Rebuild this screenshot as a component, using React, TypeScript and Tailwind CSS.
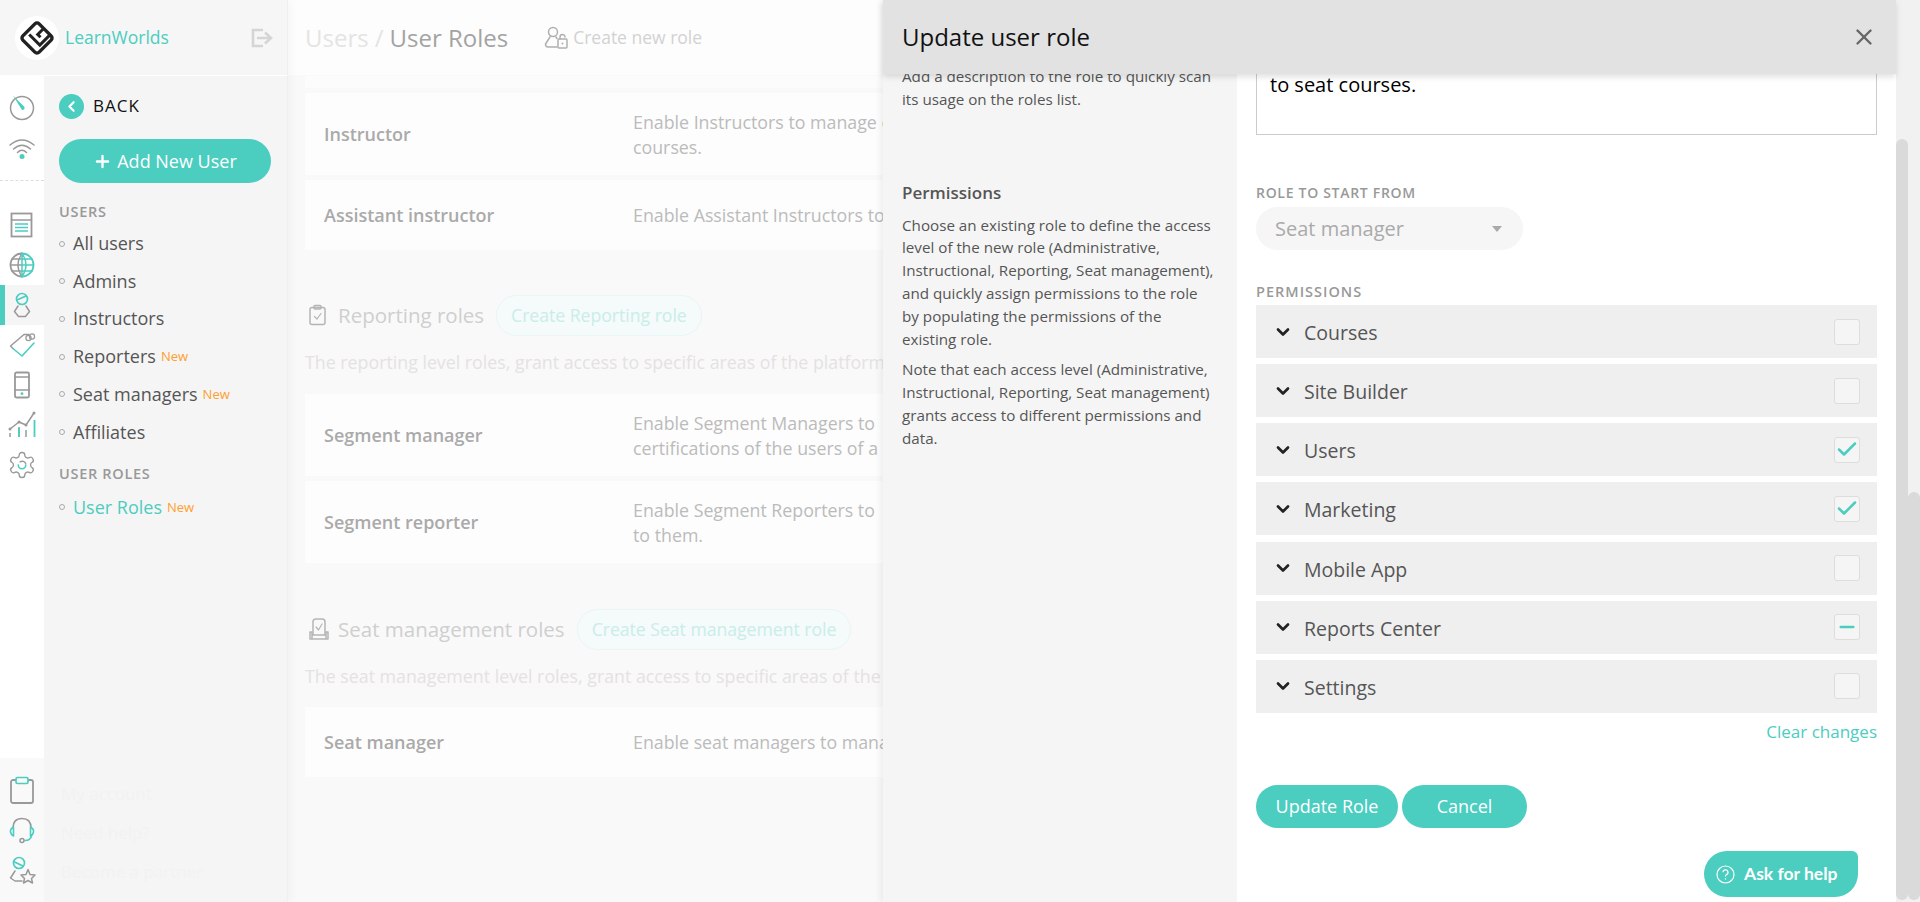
import { Check, ChevronDown, ChevronLeft, Minus, Plus, X } from "lucide-react";
import React from "react";

const teal = "#4bcdc0";
const grey = "#999999";

const Icon = ({ children, size = 30, box = 30 }: { children: React.ReactNode; size?: number; box?: number }) => (
  <svg width={size} height={size} viewBox={`0 0 ${box} ${box}`} fill="none" strokeWidth={1.5} strokeLinecap="round" strokeLinejoin="round">
    {children}
  </svg>
);

const railTop = [
  <Icon key="gauge">
    <circle cx="15" cy="16" r="11.5" stroke={grey} />
    <path d="M6 3.5 L17.5 15 Q18 18 15 18 Z" fill={teal} />
  </Icon>,
  <Icon key="wifi">
    <path d="M3 13 Q15 3 27 13" stroke={grey} />
    <path d="M6.5 17 Q15 9.5 23.5 17" stroke={grey} />
    <path d="M10.5 20.5 Q15 16 19.5 20.5" stroke={grey} />
    <circle cx="15" cy="24.5" r="2.5" fill={teal} />
  </Icon>,
];

const railMain = [
  <Icon key="list">
    <rect x="4.5" y="3.5" width="20" height="23" stroke={grey} strokeWidth={1.8} strokeLinejoin="miter" />
    <path d="M4.5 10 H24.5" stroke={grey} />
    <path d="M8 14 H21 M8 17.5 H21 M8 21 H21" stroke={teal} strokeWidth={1.6} strokeLinecap="butt" />
  </Icon>,
  <Icon key="globe">
    <path d="M15 3.5 A11.5 11.5 0 0 0 15 26.5" stroke={grey} strokeWidth={1.8} />
    <path d="M15 3.5 A11.5 11.5 0 0 1 15 26.5" stroke={teal} strokeWidth={1.8} />
    <path d="M15 3.5 Q7 15 15 26.5 M3.5 15 H15 M5 9 H15 M5 21 H15" stroke={grey} />
    <path d="M15 3.5 Q23 15 15 26.5 M15 3.5 V26.5 M15 15 H26.5 M15 9 H25 M15 21 H25" stroke={teal} />
  </Icon>,
  <Icon key="user">
    <circle cx="15" cy="9" r="5.5" stroke={teal} strokeWidth={1.7} />
    <path d="M10 10 L19 6" stroke={teal} strokeWidth={1.7} />
    <path d="M11 16 L7.5 21.5 L11.5 26.5 H18.5 L22.5 21.5 L19 16" stroke={grey} strokeWidth={1.5} />
  </Icon>,
  <Icon key="tag">
    <path d="M3.5 16 L17 4.5 H22 M3.5 16 L6 18.5" stroke={grey} />
    <circle cx="25" cy="6.5" r="2.6" stroke={grey} strokeWidth={1.2} />
    <circle cx="21.5" cy="8" r="2.6" stroke={grey} strokeWidth={1.2} />
    <path d="M6 18.5 L15 26 L27 13" stroke={teal} strokeWidth={1.6} />
  </Icon>,
  <Icon key="phone">
    <rect x="8" y="2.5" width="14" height="25" rx="1.5" stroke={grey} strokeWidth={1.8} />
    <path d="M8 7 H22 M8 20 H22" stroke={grey} />
    <circle cx="15" cy="23.7" r="1.4" fill={teal} />
  </Icon>,
  <Icon key="chart">
    <path d="M3 19 L12 12 L19 15 L27 3" stroke={grey} />
    <circle cx="3" cy="19" r="1.5" fill={grey} />
    <circle cx="12" cy="12" r="1.5" fill={grey} />
    <circle cx="19" cy="15" r="1.5" fill={grey} />
    <circle cx="27" cy="3" r="1.5" fill={grey} />
    <path d="M3 23 V27 M12 17 V27 M19 20 V27" stroke={grey} strokeLinecap="butt" />
    <path d="M27.5 10 V27 M12 18 V27" stroke={teal} strokeWidth={1.8} strokeLinecap="butt" />
  </Icon>,
  <Icon key="gear" size={30} box={24}>
    <path
      d="M12.22 2h-.44a2 2 0 0 0-2 2v.18a2 2 0 0 1-1 1.73l-.43.25a2 2 0 0 1-2 0l-.15-.08a2 2 0 0 0-2.73.73l-.22.38a2 2 0 0 0 .73 2.73l.15.1a2 2 0 0 1 1 1.72v.51a2 2 0 0 1-1 1.74l-.15.09a2 2 0 0 0-.73 2.73l.22.38a2 2 0 0 0 2.73.73l.15-.08a2 2 0 0 1 2 0l.43.25a2 2 0 0 1 1 1.73V20a2 2 0 0 0 2 2h.44a2 2 0 0 0 2-2v-.18a2 2 0 0 1 1-1.73l.43-.25a2 2 0 0 1 2 0l.15.08a2 2 0 0 0 2.73-.73l.22-.39a2 2 0 0 0-.73-2.73l-.15-.08a2 2 0 0 1-1-1.74v-.5a2 2 0 0 1 1-1.74l.15-.09a2 2 0 0 0 .73-2.73l-.22-.38a2 2 0 0 0-2.73-.73l-.15.08a2 2 0 0 1-2 0l-.43-.25a2 2 0 0 1-1-1.73V4a2 2 0 0 0-2-2z"
      stroke={grey}
      strokeWidth={1.1}
    />
    <path d="M9 12 A3 3 0 0 0 15 12" stroke={teal} strokeWidth={1.3} />
    <path d="M10.5 9.5 A3 3 0 0 1 15 11" stroke={grey} strokeWidth={1.1} />
  </Icon>,
];

const railBottom = [
  <Icon key="clip">
    <rect x="4" y="5" width="22" height="23" rx="2" stroke={grey} strokeWidth={1.8} />
    <rect x="9" y="2.5" width="12" height="6" rx="1.5" stroke={teal} strokeWidth={1.7} fill="#f9f9f9" />
  </Icon>,
  <Icon key="headset">
    <path d="M6 13 Q6 3.5 15 3.5 Q24 3.5 24 13" stroke={grey} strokeWidth={1.7} />
    <path d="M6.5 12 Q3 14 3.5 17 Q4 20 6.5 21 Z M23.5 12 Q27 14 26.5 17 Q26 20 23.5 21 Z" stroke={teal} strokeWidth={1.6} />
    <path d="M24.5 21 Q23.5 25.5 18 25.5" stroke={teal} strokeWidth={1.6} />
    <circle cx="15" cy="25.5" r="2" stroke={grey} strokeWidth={1.5} />
  </Icon>,
  <Icon key="userstar">
    <circle cx="12" cy="8" r="5.5" stroke={teal} strokeWidth={1.7} />
    <path d="M7.5 7 L16 11" stroke={teal} strokeWidth={1.7} />
    <path d="M8 16 L3.5 23 L8 26 L15 26" stroke={grey} />
    <path d="M21 14.5 L23 19.5 L28 20 L24.5 23.5 L25.5 28 L21 25.5 L16.5 28 L17.5 23.5 L14 20 L19 19.5 Z" stroke={grey} />
  </Icon>,
];

const Bullet = () => <span className="h-[6px] w-[6px] shrink-0 rounded-full border border-[#aaaaaa]" />;

const NavItem = ({ label, isNew, active }: { label: string; isNew?: boolean; active?: boolean }) => (
  <div className="flex h-[37.7px] items-center gap-[8px]">
    <Bullet />
    <span className={`text-[18px] ${active ? "font-medium text-[#4bcdc0]" : "text-[#555555]"}`}>{label}</span>
    {isNew && <span className="-ml-[3px] text-[13px] text-[#ff9f2e]">New</span>}
  </div>
);

const Sidebar = () => (
  <div className="relative z-10 flex w-[288px] shrink-0 flex-col border-r border-[#efefef] bg-white shadow-[3px_0_8px_rgba(0,0,0,0.03)]">
    <div className="flex h-[76px] items-center border-b border-white bg-[#f6f6f6] pl-[15px]">
      <div className="flex h-[44px] w-[44px] items-center justify-center rounded-full bg-white">
        <svg width="38" height="38" viewBox="-19 -19 38 38">
          <g transform="rotate(45)">
            <rect x="-11.5" y="-11.5" width="23" height="23" rx="3" fill="#ffffff" stroke="#222222" strokeWidth="3.4" />
            <path d="M-8 3 H7 V-11 M-2 -11 V-3 H2" fill="none" stroke="#222222" strokeWidth="3" />
          </g>
        </svg>
      </div>
      <span className="ml-[6px] text-[17.5px] text-[#4bcdc0]">LearnWorlds</span>
      <svg className="ml-auto mr-[13px]" width="23" height="20" viewBox="0 0 23 20" fill="none" stroke="#d5d5d5" strokeWidth="2.6">
        <path d="M12 2 H2 V18 H12" />
        <path d="M6 10 H18 M14 4.5 L20 10 L14 15.5" />
      </svg>
    </div>
    <div className="flex min-h-0 flex-1">
      <div className="flex w-[44px] shrink-0 flex-col">
        <div className="flex-1 bg-white pt-[11px]">
          {railTop.map((icon, i) => (
            <div key={i} className="flex h-[40px] items-center justify-center">
              {icon}
            </div>
          ))}
          <div className="mt-[13px] border-t border-dashed border-[#dddddd]" />
          <div className="mt-[24px]">
            {railMain.map((icon, i) => (
              <div
                key={i}
                className={`flex h-[40px] items-center justify-center ${i === 2 ? "border-l-[5px] border-[#4bcdc0] bg-[#f5f5f5] pr-[5px]" : ""}`}
              >
                {icon}
              </div>
            ))}
          </div>
        </div>
        <div className="h-[144px] bg-[#f9f9f9] pt-[12px]">
          {railBottom.map((icon, i) => (
            <div key={i} className="flex h-[40px] items-center justify-center">
              {icon}
            </div>
          ))}
        </div>
      </div>
      <div className="flex flex-1 flex-col bg-[#f5f5f5] pl-[15px] pr-[16px] pt-[17px]">
        <div className="flex h-[26px] items-center gap-[9px]">
          <span className="flex h-[25px] w-[25px] items-center justify-center rounded-full bg-[#4bcdc0]">
            <ChevronLeft size={17} color="#ffffff" strokeWidth={3} />
          </span>
          <span className="text-[17px] tracking-[1px] text-[#111111]">BACK</span>
        </div>
        <div className="mt-[20px] flex h-[44px] items-center justify-center gap-[5px] rounded-full bg-[#4bcdc0] text-[18px] text-white">
          <Plus size={19} strokeWidth={3} />
          <span>Add New User</span>
        </div>
        <div className="mt-[18px] text-[14.5px] font-semibold tracking-[0.7px] text-[#999999]">USERS</div>
        <div className="mt-[2px]">
          <NavItem label="All users" />
          <NavItem label="Admins" />
          <NavItem label="Instructors" />
          <NavItem label="Reporters" isNew />
          <NavItem label="Seat managers" isNew />
          <NavItem label="Affiliates" />
        </div>
        <div className="mt-[12px] text-[14.5px] font-semibold tracking-[0.7px] text-[#999999]">USER ROLES</div>
        <div className="mt-[4px]">
          <NavItem label="User Roles" isNew active />
        </div>
        <div className="mt-auto flex flex-col gap-[15px] pb-[18px] pl-[2px] text-[17px] leading-[24px] text-[#f2f2f2]">
          <span>My account</span>
          <span>Need help?</span>
          <span>Become a partner</span>
        </div>
      </div>
    </div>
  </div>
);

const RoleRow = ({ name, lines, h }: { name: string; lines: string[]; h: string }) => (
  <div className={`flex items-center bg-[#fdfdfd] pl-[19px] ${h}`}>
    <span className="w-[309px] shrink-0 pt-[1px] text-[18px] font-semibold text-[#aaaaaa]">{name}</span>
    <span className="whitespace-nowrap pt-[1px] text-[17.8px] leading-[25px] text-[#bbbbbb]">
      {lines.map((l) => (
        <span key={l} className="block">
          {l}
        </span>
      ))}
    </span>
  </div>
);

const SectionHead = ({ icon, title, cta, note }: { icon: React.ReactNode; title: string; cta: string; note: string }) => (
  <>
    <div className="flex h-[42px] items-center">
      <span className="flex w-[26px] shrink-0 justify-start pl-[2px]">{icon}</span>
      <span className="ml-[7px] text-[20.5px] text-[#cfcfcf]">{title}</span>
      <span className="ml-[12px] flex h-[41px] items-center rounded-full border border-[#e9f6f4] bg-[#f5fafa] px-[14px] text-[17.6px] text-[#c8eee9]">
        {cta}
      </span>
    </div>
    <div className="mt-[14px] whitespace-nowrap text-[17.8px] leading-[24px] text-[#e5e2e2]">{note}</div>
  </>
);

const Main = () => (
  <div className="flex w-[595px] shrink-0 flex-col overflow-hidden bg-[#f9f9f9]">
    <div className="flex h-[75px] shrink-0 items-center bg-[#fdfdfd] pl-[17px]">
      <span className="text-[24px] text-[#e4e4e4]">Users</span>
      <span className="ml-[6px] text-[24px] text-[#e4e4e4]">/</span>
      <span className="ml-[6px] text-[24px] text-[#a3a3a3]">User Roles</span>
      <span className="ml-[36px]">
        <Icon size={24} box={24}>
          <circle cx="9" cy="6" r="4.5" stroke="#b0b0b0" />
          <path d="M6 11 L1.5 18 Q1.5 21 4 21 H13 M12 11 L13 12.5" stroke="#b0b0b0" />
          <rect x="14" y="13" width="9" height="9" rx="1" stroke="#b0b0b0" />
          <path d="M16 13 V11 A2.5 2.5 0 0 1 21 11" stroke="#b0b0b0" />
          <circle cx="18.5" cy="17.5" r="1" fill="#b0b0b0" />
        </Icon>
      </span>
      <span className="ml-[5px] text-[17.5px] text-[#d2d2d2]">Create new role</span>
    </div>
    <div className="flex flex-col pl-[17px]">
      <div className="mt-[1px] h-[12px] bg-[#fcfcfc]" />
      <div className="mt-[5px] flex flex-col gap-[5px]">
        <RoleRow h="h-[82px]" name="Instructor" lines={["Enable Instructors to manage c", "courses."]} />
        <RoleRow h="h-[70px]" name="Assistant instructor" lines={["Enable Assistant Instructors to"]} />
      </div>
      <div className="mt-[44px]">
        <SectionHead
          icon={
            <Icon size={22} box={22}>
              <rect x="3" y="3.5" width="15" height="17" rx="2" stroke="#b5b5b5" />
              <rect x="7" y="1.5" width="7" height="3.5" rx="1" stroke="#b5b5b5" />
              <path d="M7.5 12.5 L10 15 L14 9.5" stroke="#b5b5b5" strokeWidth={1.2} />
            </Icon>
          }
          title="Reporting roles"
          cta="Create Reporting role"
          note="The reporting level roles, grant access to specific areas of the platform"
        />
      </div>
      <div className="mt-[20px] flex flex-col gap-[5px]">
        <RoleRow h="h-[82px]" name="Segment manager" lines={["Enable Segment Managers to", "certifications of the users of a"]} />
        <RoleRow h="h-[82px]" name="Segment reporter" lines={["Enable Segment Reporters to", "to them."]} />
      </div>
      <div className="mt-[45px]">
        <SectionHead
          icon={
            <Icon size={24} box={24}>
              <path d="M6 18 V5 Q6 2 9 2 H15 Q18 2 18 5 V18" stroke="#b5b5b5" />
              <path d="M3 15 H5 V22 H3 Z M19 15 H21 V22 H19 Z M5 18 H19 V22 H5" stroke="#b5b5b5" />
              <path d="M9 10 L11.5 13 L15 7" stroke="#b5b5b5" strokeWidth={1.2} />
            </Icon>
          }
          title="Seat management roles"
          cta="Create Seat management role"
          note="The seat management level roles, grant access to specific areas of the"
        />
      </div>
      <div className="mt-[19px]">
        <RoleRow h="h-[70px]" name="Seat manager" lines={["Enable seat managers to mana"]} />
      </div>
    </div>
  </div>
);

const permissions: { name: string; state?: "on" | "some" }[] = [
  { name: "Courses" },
  { name: "Site Builder" },
  { name: "Users", state: "on" },
  { name: "Marketing", state: "on" },
  { name: "Mobile App" },
  { name: "Reports Center", state: "some" },
  { name: "Settings" },
];

const PermissionRow = ({ name, state }: { name: string; state?: "on" | "some" }) => (
  <div className="flex h-[53px] items-center bg-[#efefef] pl-[17px] pr-[17px]">
    <ChevronDown size={20} color="#222222" strokeWidth={3.2} />
    <span className="ml-[11px] pt-[2px] text-[19.5px] font-medium text-[#555555]">{name}</span>
    <span className="ml-auto flex h-[26px] w-[26px] items-center justify-center rounded-[3px] border border-[#dddddd] bg-[#f5f5f5]">
      {state === "on" && <Check size={25} color="#4bcdc0" strokeWidth={2.5} />}
      {state === "some" && <Minus size={22} color="#4bcdc0" strokeWidth={2.5} />}
    </span>
  </div>
);

const Panel = () => (
  <div className="absolute bottom-0 left-[883px] right-0 top-0 z-20 flex shadow-[-3px_0_6px_rgba(0,0,0,0.06)]">
    <div className="flex min-w-0 flex-1 flex-col">
      <div className="relative z-10 flex h-[74px] shrink-0 items-center justify-between bg-[#e2e2e2] pl-[19px] pr-[19px] shadow-[0_3px_6px_rgba(0,0,0,0.12)]">
        <span className="text-[24px] text-[#111111]">Update user role</span>
        <X size={26} color="#666666" strokeWidth={2.2} />
      </div>
      <div className="flex min-h-0 flex-1 overflow-hidden">
        <div className="w-[354px] shrink-0 bg-[#f5f5f5] pl-[19px] pr-[14px] text-[15.2px] leading-[22.8px] text-[#555555]">
          <p className="-mt-[9px] whitespace-nowrap">
            Add a description to the role to quickly scan
            <br />
            its usage on the roles list.
          </p>
          <h3 className="mt-[70px] text-[17px] font-semibold leading-[24px]">Permissions</h3>
          <p className="mt-[9px] whitespace-nowrap">
            Choose an existing role to define the access
            <br />
            level of the new role (Administrative,
            <br />
            Instructional, Reporting, Seat management),
            <br />
            and quickly assign permissions to the role
            <br />
            by populating the permissions of the
            <br />
            existing role.
          </p>
          <p className="mt-[8px] whitespace-nowrap">
            Note that each access level (Administrative,
            <br />
            Instructional, Reporting, Seat management)
            <br />
            grants access to different permissions and
            <br />
            data.
          </p>
        </div>
        <div className="relative flex-1 bg-white pl-[19px] pr-[19px]">
          <div className="-mt-[44px] h-[105px] border border-[#cccccc] px-[13px] pt-[40px] text-[20px] leading-[27px] text-black">
            to seat courses.
          </div>
          <div className="mt-[48px] text-[14px] font-semibold leading-[20px] tracking-[0.7px] text-[#999999]">ROLE TO START FROM</div>
          <div className="mt-[4px] flex h-[43px] w-[267px] items-center rounded-full bg-[#f6f6f6] pl-[19px] pr-[21px] text-[20px] text-[#aaaaaa]">
            <span>Seat manager</span>
            <span className="ml-auto h-0 w-0 border-x-[5px] border-t-[6px] border-x-transparent border-t-[#aaaaaa]" />
          </div>
          <div className="mt-[32px] text-[14.5px] font-semibold leading-[20px] tracking-[1px] text-[#999999]">PERMISSIONS</div>
          <div className="mt-[3px] flex flex-col gap-[6.17px]">
            {permissions.map((p) => (
              <PermissionRow key={p.name} name={p.name} state={p.state} />
            ))}
          </div>
          <div className="mt-[8px] text-right text-[17px] leading-[22px] text-[#4bcdc0]">Clear changes</div>
          <div className="mt-[42px] flex gap-[4px] text-[18px] text-white">
            <span className="flex h-[43px] w-[142px] items-center justify-center rounded-full bg-[#4bcdc0]">Update Role</span>
            <span className="flex h-[43px] w-[125px] items-center justify-center rounded-full bg-[#4bcdc0]">Cancel</span>
          </div>
          <div className="absolute bottom-[5px] right-[38px] flex h-[46px] w-[154px] items-center gap-[9px] rounded-bl-[23px] rounded-br-[23px] rounded-tl-[23px] rounded-tr-[6px] bg-[#4bcdc0] pl-[12px] font-['Lato',sans-serif] text-[17.5px] font-bold text-white">
            <svg width="19" height="19" viewBox="0 0 19 19" fill="none" stroke="#ffffff" strokeWidth="1.2">
              <circle cx="9.5" cy="9.5" r="8.5" />
              <path d="M7 7.3 A2.5 2.5 0 1 1 10.5 9.6 Q9.5 10.2 9.5 11.5 M9.5 13.3 V14.5" />
            </svg>
            <span>Ask for help</span>
          </div>
        </div>
      </div>
    </div>
    <div className="flex w-[12px] shrink-0 flex-col bg-[#f1f1f1] pb-[2px] pt-[139px]">
      <div className="flex-1 rounded-full bg-[#dadada]" />
    </div>
    <div className="flex w-[12px] shrink-0 flex-col bg-[#f1f1f1] pb-[2px] pt-[492px]">
      <div className="flex-1 rounded-full bg-[#dadada]" />
    </div>
  </div>
);

export default function App() {
  return (
    <div className="relative flex h-[902px] w-[1920px] overflow-hidden bg-[#f9f9f9] font-['Open_Sans',sans-serif]">
      <Sidebar />
      <Main />
      <Panel />
    </div>
  );
}
